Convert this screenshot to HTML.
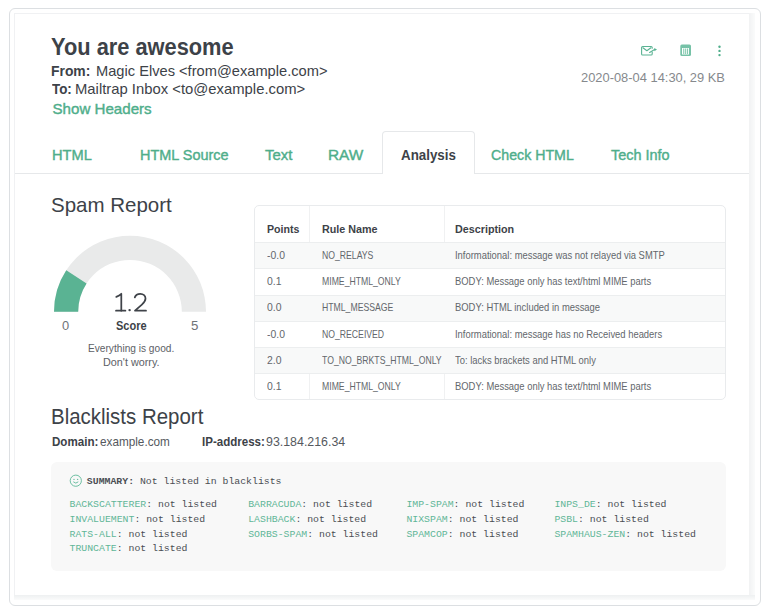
<!DOCTYPE html>
<html><head><meta charset="utf-8"><style>
html,body{margin:0;padding:0;background:#fff;width:768px;height:612px;overflow:hidden;position:relative}
.t{position:absolute;white-space:nowrap;transform-origin:0 0}
.box{position:absolute;box-sizing:border-box}
.mono{font-family:'Liberation Mono',monospace;color:#4a4e53}
.mono .k{color:#5fb697}
.mono b{font-weight:bold}
</style></head><body>
<div class="box" style="left:9px;top:8px;width:752px;height:598px;border:1px solid #dcdfe2;border-radius:6px"></div>
<div class="box" style="left:14px;top:13px;width:741px;height:587px;border-top:1px solid #f0f1f3;border-left:1px solid #f0f1f3"></div>
<div class="box" style="left:749px;top:13px;width:6px;height:587px;background:linear-gradient(90deg,#f1f2f3,#fafbfb)"></div>
<div class="box" style="left:14px;top:595px;width:741px;height:5px;background:linear-gradient(180deg,#eef0f1,#fafbfb)"></div>
<!-- tabs bar -->
<div class="box" style="left:15px;top:173px;width:734px;height:1px;background:#e6e8ea"></div>
<div class="box" style="left:382px;top:131px;width:93px;height:43px;background:#fff;border:1px solid #e6e8ea;border-bottom:none;border-radius:4px 4px 0 0"></div>
<!-- icons -->
<svg class="box" style="left:630px;top:38px" width="100" height="24" viewBox="630 38 100 24">
<g fill="none" stroke="#5ab393" stroke-width="1.1" stroke-linecap="round" stroke-linejoin="round">
<path d="M652.2,52 V53.9 Q652.2,55 651.1,55 H642.6 Q641.6,55 641.6,53.9 V47.6 Q641.6,46.5 642.6,46.5 H651.1 Q652.2,46.5 652.2,47.6 V48.3"/>
<path d="M642.9,47.8 L646.9,50.8 L650.9,47.8"/>
<path d="M649.6,52.4 L654.6,49.5"/>
</g>
<path d="M654.2,48 L657,49.5 L654.4,51.2 Z" fill="#5ab393"/>
<path d="M680.3,46 Q680.3,44.5 681.8,44.5 H689.5 Q691,44.5 691,46 V54.5 Q691,56 689.5,56 H681.8 Q680.3,56 680.3,54.5 Z" fill="#76c2a7"/>
<rect x="682" y="48" width="7" height="6.5" fill="#fff"/>
<rect x="683.2" y="48.5" width="1.1" height="5.6" fill="#86cab1"/>
<rect x="685.1" y="48.5" width="1.1" height="5.6" fill="#86cab1"/>
<rect x="687.0" y="48.5" width="1.1" height="5.6" fill="#86cab1"/>
<circle cx="719.5" cy="46.7" r="1.2" fill="#4fae8b"/>
<circle cx="719.5" cy="50.9" r="1.2" fill="#4fae8b"/>
<circle cx="719.5" cy="55.1" r="1.2" fill="#4fae8b"/>
</svg>
<!-- gauge -->
<svg class="box" style="left:0;top:0" width="768" height="612" viewBox="0 0 768 612">
<path d="M54,311.7 A76,76 0 0 1 206,311.7 L181.8,311.7 A51.8,51.8 0 0 0 78.2,311.7 Z" fill="#e9eaea"/>
<path d="M54,311.7 A76,76 0 0 1 66.26,270.31 L86.56,283.49 A51.8,51.8 0 0 0 78.2,311.7 Z" fill="#5ab393"/>
</svg>
<!-- table -->
<div class="box" style="left:254px;top:205px;width:472px;height:195px;border:1px solid #e9ebed;border-radius:5px;overflow:hidden">
  <div class="box" style="left:0;top:36px;width:470px;height:27px;background:#f8f9f9;border-top:1px solid #eceeef;border-bottom:1px solid #eceeef"></div>
  <div class="box" style="left:0;top:89px;width:470px;height:27px;background:#f8f9f9;border-top:1px solid #eceeef;border-bottom:1px solid #eceeef"></div>
  <div class="box" style="left:0;top:141px;width:470px;height:27px;background:#f8f9f9;border-top:1px solid #eceeef;border-bottom:1px solid #eceeef"></div>
  <div class="box" style="left:54px;top:0;width:1px;height:36px;background:#f0f1f2"></div>
  <div class="box" style="left:189px;top:0;width:1px;height:36px;background:#f0f1f2"></div>
  <div class="box" style="left:54px;top:168px;width:1px;height:26px;background:#f0f1f2"></div>
  <div class="box" style="left:189px;top:168px;width:1px;height:26px;background:#f0f1f2"></div>
</div>
<!-- summary box -->
<div class="box" style="left:51px;top:462px;width:675px;height:109px;background:#f8f8f8;border-radius:6px"></div>
<div class="t" style="left:50.56px;top:34px;font-family:'Liberation Sans';font-weight:bold;font-size:24.13px;line-height:25px;color:#3d4248;transform:scaleX(0.9041);">You are awesome</div>
<div class="t" style="left:51.10px;top:63px;font-family:'Liberation Sans';font-weight:bold;font-size:15.12px;line-height:16px;color:#3d4248;transform:scaleX(0.9192);">From:</div>
<div class="t" style="left:96.03px;top:63px;font-family:'Liberation Sans';font-weight:normal;font-size:15.12px;line-height:16px;color:#3d4248;transform:scaleX(0.9697);">Magic Elves &lt;from@example.com&gt;</div>
<div class="t" style="left:51.87px;top:81px;font-family:'Liberation Sans';font-weight:bold;font-size:15.12px;line-height:16px;color:#3d4248;transform:scaleX(0.8853);">To:</div>
<div class="t" style="left:75.41px;top:81px;font-family:'Liberation Sans';font-weight:normal;font-size:15.12px;line-height:16px;color:#3d4248;transform:scaleX(0.9815);">Mailtrap Inbox &lt;to@example.com&gt;</div>
<div class="t" style="left:52.52px;top:101px;font-family:'Liberation Sans';font-weight:normal;font-size:15.12px;line-height:16px;color:#4fae8b;-webkit-text-stroke:0.40px #4fae8b;">Show Headers</div>
<div class="t" style="left:580.61px;top:71px;font-family:'Liberation Sans';font-weight:normal;font-size:13.23px;line-height:14px;color:#86898d;transform:scaleX(0.9745);">2020-08-04 14:30, 29 KB</div>
<div class="t" style="left:51.83px;top:148px;font-family:'Liberation Sans';font-weight:normal;font-size:14.83px;line-height:15px;color:#4fae8b;transform:scaleX(0.9872);-webkit-text-stroke:0.40px #4fae8b;">HTML</div>
<div class="t" style="left:140.44px;top:148px;font-family:'Liberation Sans';font-weight:normal;font-size:14.83px;line-height:15px;color:#4fae8b;transform:scaleX(0.9750);-webkit-text-stroke:0.40px #4fae8b;">HTML Source</div>
<div class="t" style="left:265.10px;top:148px;font-family:'Liberation Sans';font-weight:normal;font-size:14.83px;line-height:15px;color:#4fae8b;transform:scaleX(1.0052);-webkit-text-stroke:0.40px #4fae8b;">Text</div>
<div class="t" style="left:328.17px;top:148px;font-family:'Liberation Sans';font-weight:normal;font-size:14.83px;line-height:15px;color:#4fae8b;transform:scaleX(1.0377);-webkit-text-stroke:0.40px #4fae8b;">RAW</div>
<div class="t" style="left:491.19px;top:148px;font-family:'Liberation Sans';font-weight:normal;font-size:14.83px;line-height:15px;color:#4fae8b;transform:scaleX(0.9570);-webkit-text-stroke:0.40px #4fae8b;">Check HTML</div>
<div class="t" style="left:611.41px;top:148px;font-family:'Liberation Sans';font-weight:normal;font-size:14.83px;line-height:15px;color:#4fae8b;transform:scaleX(0.9742);-webkit-text-stroke:0.40px #4fae8b;">Tech Info</div>
<div class="t" style="left:400.67px;top:147px;font-family:'Liberation Sans';font-weight:bold;font-size:15.26px;line-height:16px;color:#3d4248;transform:scaleX(0.8747);">Analysis</div>
<div class="t" style="left:50.98px;top:194px;font-family:'Liberation Sans';font-weight:normal;font-size:20.78px;line-height:21px;color:#3d4248;transform:scaleX(0.9870);">Spam Report</div>
<svg class="box" style="left:100px;top:285px" width="60" height="35" viewBox="100 285 60 35"><g fill="none" stroke="#3f4349" stroke-width="1.75" stroke-linecap="round" stroke-linejoin="round"><path d="M116.3,296.9 Q119.5,295.6 121.3,293.8 V310.7"/><path d="M116.0,310.7 H125.4"/><path d="M134.8,297.4 C135.6,295.0 137.8,293.9 140.3,293.9 C143.4,293.9 145.5,295.9 145.5,298.6 C145.5,301.0 144.2,302.6 141.9,304.6 L135.0,310.7 H146.0"/></g><circle cx="129.6" cy="310.1" r="1.2" fill="#3f4349"/></svg>
<div class="t" style="left:62.38px;top:320px;font-family:'Liberation Sans';font-weight:normal;font-size:12.21px;line-height:13px;color:#6f7378;transform:scaleX(1.0579);">0</div>
<div class="t" style="left:191.17px;top:320px;font-family:'Liberation Sans';font-weight:normal;font-size:12.21px;line-height:13px;color:#6f7378;transform:scaleX(1.0863);">5</div>
<div class="t" style="left:115.87px;top:320px;font-family:'Liberation Sans';font-weight:bold;font-size:12.50px;line-height:13px;color:#3d4248;transform:scaleX(0.8840);">Score</div>
<div class="t" style="left:88.39px;top:343px;font-family:'Liberation Sans';font-weight:normal;font-size:10.90px;line-height:11px;color:#5d6166;transform:scaleX(0.9311);">Everything is good.</div>
<div class="t" style="left:102.93px;top:357px;font-family:'Liberation Sans';font-weight:normal;font-size:10.76px;line-height:11px;color:#5d6166;transform:scaleX(1.0061);">Don't worry.</div>
<div class="t" style="left:266.71px;top:223px;font-family:'Liberation Sans';font-weight:bold;font-size:11.05px;line-height:12px;color:#3d4248;transform:scaleX(0.9605);">Points</div>
<div class="t" style="left:321.70px;top:223px;font-family:'Liberation Sans';font-weight:bold;font-size:11.05px;line-height:12px;color:#3d4248;transform:scaleX(0.9723);">Rule Name</div>
<div class="t" style="left:454.80px;top:223px;font-family:'Liberation Sans';font-weight:bold;font-size:11.05px;line-height:12px;color:#3d4248;transform:scaleX(0.9735);">Description</div>
<div class="t" style="left:266.73px;top:250px;font-family:'Liberation Sans';font-weight:normal;font-size:10.17px;line-height:11px;color:#63676c;transform:scaleX(1.0248);">-0.0</div>
<div class="t" style="left:321.51px;top:250px;font-family:'Liberation Sans';font-weight:normal;font-size:10.17px;line-height:11px;color:#63676c;transform:scaleX(0.8534);">NO_RELAYS</div>
<div class="t" style="left:454.55px;top:250px;font-family:'Liberation Sans';font-weight:normal;font-size:10.17px;line-height:11px;color:#63676c;transform:scaleX(0.9267);">Informational: message was not relayed via SMTP</div>
<div class="t" style="left:266.78px;top:276px;font-family:'Liberation Sans';font-weight:normal;font-size:10.17px;line-height:11px;color:#63676c;transform:scaleX(1.0248);">0.1</div>
<div class="t" style="left:321.51px;top:276px;font-family:'Liberation Sans';font-weight:normal;font-size:10.17px;line-height:11px;color:#63676c;transform:scaleX(0.8534);">MIME_HTML_ONLY</div>
<div class="t" style="left:454.65px;top:276px;font-family:'Liberation Sans';font-weight:normal;font-size:10.17px;line-height:11px;color:#63676c;transform:scaleX(0.9267);">BODY: Message only has text/html MIME parts</div>
<div class="t" style="left:266.78px;top:302px;font-family:'Liberation Sans';font-weight:normal;font-size:10.17px;line-height:11px;color:#63676c;transform:scaleX(1.0248);">0.0</div>
<div class="t" style="left:321.51px;top:302px;font-family:'Liberation Sans';font-weight:normal;font-size:10.17px;line-height:11px;color:#63676c;transform:scaleX(0.8534);">HTML_MESSAGE</div>
<div class="t" style="left:454.65px;top:302px;font-family:'Liberation Sans';font-weight:normal;font-size:10.17px;line-height:11px;color:#63676c;transform:scaleX(0.9267);">BODY: HTML included in message</div>
<div class="t" style="left:266.73px;top:329px;font-family:'Liberation Sans';font-weight:normal;font-size:10.17px;line-height:11px;color:#63676c;transform:scaleX(1.0248);">-0.0</div>
<div class="t" style="left:321.51px;top:329px;font-family:'Liberation Sans';font-weight:normal;font-size:10.17px;line-height:11px;color:#63676c;transform:scaleX(0.8534);">NO_RECEIVED</div>
<div class="t" style="left:454.55px;top:329px;font-family:'Liberation Sans';font-weight:normal;font-size:10.17px;line-height:11px;color:#63676c;transform:scaleX(0.9267);">Informational: message has no Received headers</div>
<div class="t" style="left:266.68px;top:355px;font-family:'Liberation Sans';font-weight:normal;font-size:10.17px;line-height:11px;color:#63676c;transform:scaleX(1.0248);">2.0</div>
<div class="t" style="left:322.03px;top:355px;font-family:'Liberation Sans';font-weight:normal;font-size:10.17px;line-height:11px;color:#63676c;transform:scaleX(0.8534);">TO_NO_BRKTS_HTML_ONLY</div>
<div class="t" style="left:455.21px;top:355px;font-family:'Liberation Sans';font-weight:normal;font-size:10.17px;line-height:11px;color:#63676c;transform:scaleX(0.9267);">To: lacks brackets and HTML only</div>
<div class="t" style="left:266.78px;top:381px;font-family:'Liberation Sans';font-weight:normal;font-size:10.17px;line-height:11px;color:#63676c;transform:scaleX(1.0248);">0.1</div>
<div class="t" style="left:321.51px;top:381px;font-family:'Liberation Sans';font-weight:normal;font-size:10.17px;line-height:11px;color:#63676c;transform:scaleX(0.8534);">MIME_HTML_ONLY</div>
<div class="t" style="left:454.65px;top:381px;font-family:'Liberation Sans';font-weight:normal;font-size:10.17px;line-height:11px;color:#63676c;transform:scaleX(0.9267);">BODY: Message only has text/html MIME parts</div>
<div class="t" style="left:51.06px;top:406px;font-family:'Liberation Sans';font-weight:normal;font-size:21.22px;line-height:22px;color:#3d4248;transform:scaleX(0.9642);">Blacklists Report</div>
<div class="t" style="left:51.75px;top:435px;font-family:'Liberation Sans';font-weight:bold;font-size:12.79px;line-height:13px;color:#3d4248;transform:scaleX(0.9072);">Domain:</div>
<div class="t" style="left:99.83px;top:435px;font-family:'Liberation Sans';font-weight:normal;font-size:12.79px;line-height:13px;color:#55595e;transform:scaleX(0.9189);">example.com</div>
<div class="t" style="left:201.55px;top:435px;font-family:'Liberation Sans';font-weight:bold;font-size:12.79px;line-height:13px;color:#3d4248;transform:scaleX(0.9024);">IP-address:</div>
<div class="t" style="left:265.69px;top:435px;font-family:'Liberation Sans';font-weight:normal;font-size:12.79px;line-height:13px;color:#55595e;transform:scaleX(0.9692);">93.184.216.34</div>
<div class="t mono" style="left:86.86px;top:477px;font-size:9.83px;line-height:10px;transform:scaleY(0.880);transform-origin:0 7px"><b>SUMMARY:</b> Not listed in blacklists</div>
<div class="t mono" style="left:69.51px;top:500px;font-size:9.83px;line-height:10px;transform:scaleY(0.880);transform-origin:0 7px"><span class="k">BACKSCATTERER</span>: not listed</div>
<div class="t mono" style="left:69.51px;top:515px;font-size:9.83px;line-height:10px;transform:scaleY(0.880);transform-origin:0 7px"><span class="k">INVALUEMENT</span>: not listed</div>
<div class="t mono" style="left:69.51px;top:530px;font-size:9.83px;line-height:10px;transform:scaleY(0.880);transform-origin:0 7px"><span class="k">RATS-ALL</span>: not listed</div>
<div class="t mono" style="left:69.51px;top:544px;font-size:9.83px;line-height:10px;transform:scaleY(0.880);transform-origin:0 7px"><span class="k">TRUNCATE</span>: not listed</div>
<div class="t mono" style="left:248.21px;top:500px;font-size:9.83px;line-height:10px;transform:scaleY(0.880);transform-origin:0 7px"><span class="k">BARRACUDA</span>: not listed</div>
<div class="t mono" style="left:248.21px;top:515px;font-size:9.83px;line-height:10px;transform:scaleY(0.880);transform-origin:0 7px"><span class="k">LASHBACK</span>: not listed</div>
<div class="t mono" style="left:248.21px;top:530px;font-size:9.83px;line-height:10px;transform:scaleY(0.880);transform-origin:0 7px"><span class="k">SORBS-SPAM</span>: not listed</div>
<div class="t mono" style="left:406.41px;top:500px;font-size:9.83px;line-height:10px;transform:scaleY(0.880);transform-origin:0 7px"><span class="k">IMP-SPAM</span>: not listed</div>
<div class="t mono" style="left:406.41px;top:515px;font-size:9.83px;line-height:10px;transform:scaleY(0.880);transform-origin:0 7px"><span class="k">NIXSPAM</span>: not listed</div>
<div class="t mono" style="left:406.41px;top:530px;font-size:9.83px;line-height:10px;transform:scaleY(0.880);transform-origin:0 7px"><span class="k">SPAMCOP</span>: not listed</div>
<div class="t mono" style="left:554.41px;top:500px;font-size:9.83px;line-height:10px;transform:scaleY(0.880);transform-origin:0 7px"><span class="k">INPS_DE</span>: not listed</div>
<div class="t mono" style="left:554.41px;top:515px;font-size:9.83px;line-height:10px;transform:scaleY(0.880);transform-origin:0 7px"><span class="k">PSBL</span>: not listed</div>
<div class="t mono" style="left:554.41px;top:530px;font-size:9.83px;line-height:10px;transform:scaleY(0.880);transform-origin:0 7px"><span class="k">SPAMHAUS-ZEN</span>: not listed</div>
<svg class="box" style="left:69px;top:474px" width="14" height="14" viewBox="0 0 14 14"><circle cx="6.8" cy="6.7" r="5.6" fill="none" stroke="#6cbfa2" stroke-width="1"/><circle cx="5" cy="5.4" r="0.7" fill="#6cbfa2"/><circle cx="8.6" cy="5.4" r="0.7" fill="#6cbfa2"/><path d="M4.3,7.8 Q6.8,10.4 9.3,7.8" fill="none" stroke="#6cbfa2" stroke-width="1"/></svg>
</body></html>
